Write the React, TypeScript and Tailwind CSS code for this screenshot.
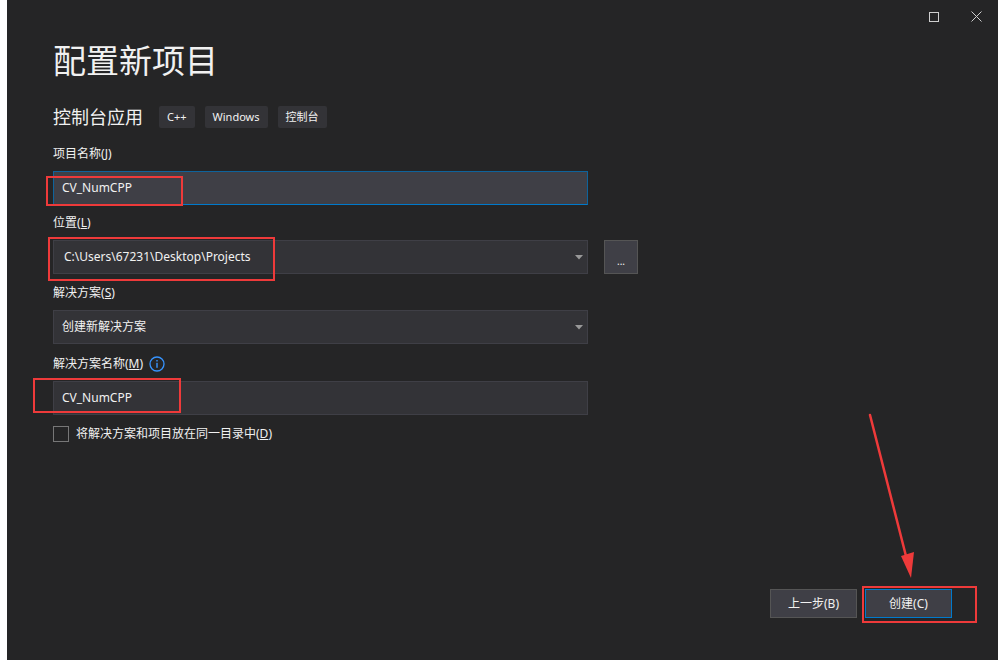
import React from "react";

const font = {
  fontFamily: '"Noto Sans", "Noto Sans CJK SC", sans-serif',
};

function Label({ text, hot }: { text: string; hot: string }) {
  return (
    <div className="text-[12px] leading-[16px] text-[#f1f1f1] mb-[9px]">
      {text}(<span className="underline">{hot}</span>)
    </div>
  );
}

function DropArrow() {
  return (
    <svg width="8" height="5" viewBox="0 0 8 5" className="absolute right-[4px] top-[14px]">
      <path d="M0 0h8L4 4.5z" fill="#999" />
    </svg>
  );
}

function Tag({ children }: { children: React.ReactNode }) {
  return (
    <span className="h-[22px] px-[8px] bg-[#333337] rounded-[2px] text-[11px] leading-[22px]">
      {children}
    </span>
  );
}

export default function App() {
  return (
    <div className="w-[1003px] h-[662px] bg-white flex" style={font}>
      <div className="relative ml-[7px] w-[991px] h-[660px] bg-[#252526] text-[#f1f1f1]">
        {/* window controls */}
        <div className="absolute right-[16px] top-[11px] flex items-center gap-[32px]">
          <div className="w-[10px] h-[10px] border border-[#cfcfcf]" />
          <svg width="11" height="11" viewBox="0 0 11 11">
            <path d="M0.5 0.5l10 10M10.5 0.5l-10 10" stroke="#cfcfcf" strokeWidth="1" />
          </svg>
        </div>

        <div className="pl-[46px] pt-[37px] w-[581px]">
          <div className="text-[33px] leading-[48px] font-normal">配置新项目</div>
          <div className="flex items-center gap-[10px] mt-[19px] mb-[16px]">
            <span className="text-[18px] leading-[26px] mr-[6px]">控制台应用</span>
            <Tag>C++</Tag>
            <Tag>Windows</Tag>
            <Tag>控制台</Tag>
          </div>

          <Label text="项目名称" hot="J" />
          <div className="h-[34px] bg-[#3f3f46] border border-[#0e639c] border-b-[#007acc] flex items-center pl-[8px] text-[12px] mb-[10px]">
            CV_NumCPP
          </div>

          <Label text="位置" hot="L" />
          <div className="flex mb-[11px]">
            <div className="relative w-[535px] shrink-0 h-[34px] bg-[#333337] border border-[#3f3f46] flex items-center pl-[10px] text-[12px]">
              C:\Users\67231\Desktop\Projects
              <DropArrow />
            </div>
            <div className="ml-[16px] w-[34px] h-[34px] shrink-0 bg-[#3f3f46] border border-[#555] flex items-end justify-center pb-[7px] text-[10px] leading-[10px]">
              ...
            </div>
          </div>

          <Label text="解决方案" hot="S" />
          <div className="relative h-[34px] bg-[#333337] border border-[#3f3f46] flex items-center pl-[8px] text-[12px] mb-[12px]">
            创建新解决方案
            <DropArrow />
          </div>

          <div className="flex items-center mb-[9px] h-[16px]">
            <span className="text-[12px] leading-[16px] text-[#f1f1f1]">
              解决方案名称(<span className="underline">M</span>)
            </span>
            <svg width="16" height="16" viewBox="0 0 16 16" className="ml-[6px]">
              <circle cx="8" cy="8" r="7" fill="none" stroke="#3794ff" strokeWidth="1.3" />
              <rect x="7.3" y="6.8" width="1.4" height="5" fill="#3794ff" />
              <rect x="7.3" y="4" width="1.4" height="1.5" fill="#3794ff" />
            </svg>
          </div>
          <div className="h-[34px] bg-[#333337] border border-[#3f3f46] flex items-center pl-[8px] text-[12px] mb-[11px]">
            CV_NumCPP
          </div>

          <div className="flex items-center">
            <div className="w-[16px] h-[16px] border border-[#777] mr-[7px]" />
            <span className="text-[12px] leading-[16px]">
              将解决方案和项目放在同一目录中(<span className="underline">D</span>)
            </span>
          </div>
        </div>

        {/* bottom buttons */}
        <div className="absolute right-[46px] top-[589px] flex gap-[8px]">
          <div className="w-[87px] h-[29px] bg-[#3f3f46] border border-[#555] flex items-center justify-center text-[12px]">
            上一步(B)
          </div>
          <div className="w-[87px] h-[29px] bg-[#3f3f46] border border-[#007acc] flex items-center justify-center text-[12px]">
            创建(C)
          </div>
        </div>

        {/* annotations */}
        <div className="absolute left-[39px] top-[176px] w-[137px] h-[30px] border-2 border-[#ee3a3a]" />
        <div className="absolute left-[41px] top-[237px] w-[227px] h-[44px] border-2 border-[#ee3a3a]" />
        <div className="absolute left-[26px] top-[378px] w-[148px] h-[35px] border-2 border-[#ee3a3a]" />
        <div className="absolute left-[855px] top-[586px] w-[115px] h-[37px] border-2 border-[#ee3a3a]" />
        <svg className="absolute left-[850px] top-[410px]" width="70" height="175" viewBox="0 0 70 175">
          <path d="M13 5 L50 150" stroke="#ee3a3a" strokeWidth="2.5" strokeLinecap="round" />
          <path d="M44 146 L57 142 L54 168 Z" fill="#ee3a3a" />
        </svg>
      </div>
    </div>
  );
}
